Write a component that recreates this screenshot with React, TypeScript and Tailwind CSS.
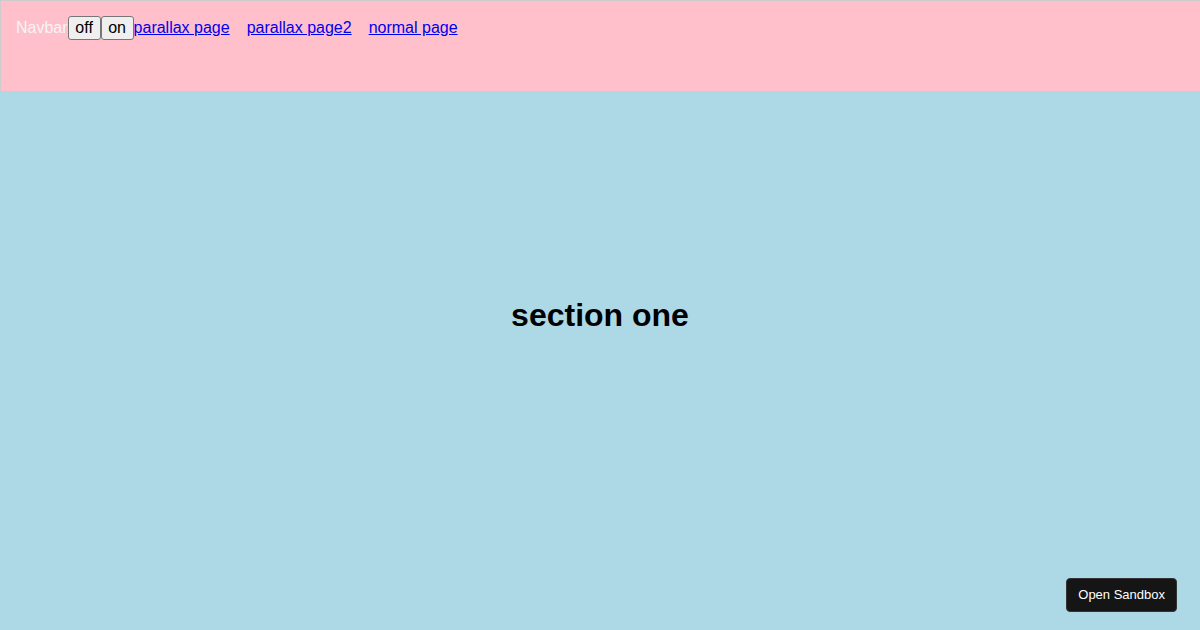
const links = [
  { label: "parallax page", href: "#parallax" },
  { label: "parallax page2", href: "#parallax2" },
  { label: "normal page", href: "#normal" },
];

function Toggle({ label }: { label: string }) {
  return (
    <button
      type="button"
      className="h-6 w-[33px] rounded-[3px] border border-[#767676] bg-[#efefef] text-center leading-5 text-black"
    >
      {label}
    </button>
  );
}

function Navbar() {
  return (
    <header className="sticky top-0 h-[92px] border border-r-0 border-[#cccccc] bg-[#ffc0cb] p-[15px]">
      <nav className="flex items-start leading-6">
        <span className="text-[#f5f5f5]">Navbar</span>
        <Toggle label="off" />
        <Toggle label="on" />
        <div className="flex gap-[17px]">
          {links.map((link) => (
            <a key={link.href} href={link.href} className="text-[#0000ee] underline">
              {link.label}
            </a>
          ))}
        </div>
      </nav>
    </header>
  );
}

export default function App() {
  return (
    <div className="flex min-h-screen flex-col bg-[#add8e6] font-['Liberation_Sans',Arial,sans-serif] text-base text-black">
      <Navbar />

      <section className="flex flex-1 items-center justify-center pb-[92px]">
        <h1 className="text-[32px] leading-9 font-bold">section one</h1>
      </section>

      {/* floating button */}
      <button
        type="button"
        className="fixed right-[23px] bottom-[18px] h-[34px] rounded-[4px] border border-[#343434] bg-[#151515] px-[11px] text-[13px] text-white"
      >
        Open Sandbox
      </button>
    </div>
  );
}
